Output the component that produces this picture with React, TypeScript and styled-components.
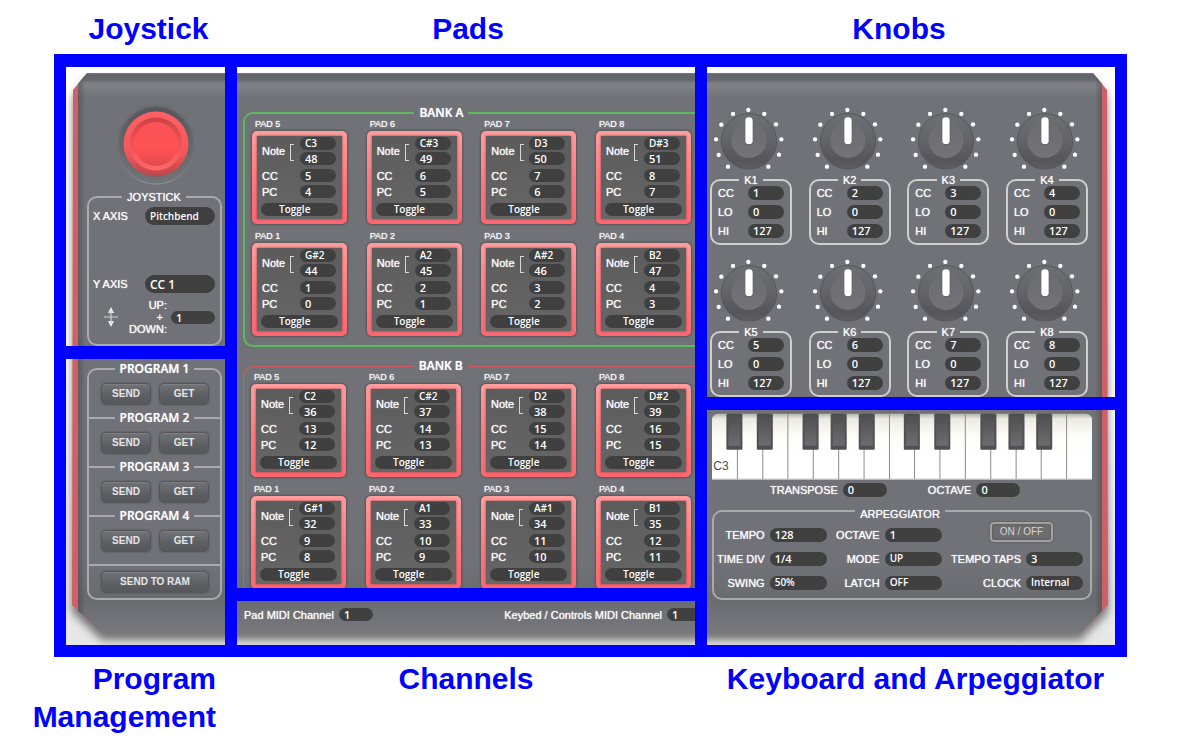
import React from "react";
import styled, { createGlobalStyle, css } from "styled-components";

const BLUE = "#0000ff";
const LABEL_FONT = '"Liberation Sans", Arial, sans-serif';
const VALUE_FONT = '"Open Sans", "Noto Sans", sans-serif';

const GlobalStyle = createGlobalStyle`
  *, *::before, *::after { box-sizing: border-box; }
  body { margin: 0; background: #fff; font-family: ${LABEL_FONT}; }
  fieldset { margin: 0; padding: 0; min-width: 0; border: 0; }
  legend { padding: 0; }
  svg { display: block; }
`;

/* ---------- page and frame ---------- */

const Page = styled.main`
  padding: 10px 73px 5px 54px;
`;

const columns = css`
  display: grid;
  grid-template-columns: minmax(0, 159fr) minmax(0, 458fr) minmax(0, 408fr);
  gap: 12px;
`;

const Titles = styled.div<{ $below?: boolean }>`
  ${columns}
  padding: ${(p) => (p.$below ? "3px 12px 0" : "0 12px 6px")};
`;

const Title = styled.h2<{ $align?: string; $shift?: string }>`
  display: flex;
  justify-content: ${(p) => p.$align ?? "center"};
  margin: 0;
  padding: ${(p) => p.$shift ?? "0"};
  color: ${BLUE};
  font-size: 30px;
  line-height: 38px;
  font-weight: 700;
  text-align: right;
  white-space: nowrap;
`;

const Frame = styled.div`
  ${columns}
  border: 12px solid ${BLUE};
  border-top-width: 13px;
  background: linear-gradient(#fff 50%, #e6e6e6 100%);
  overflow: hidden;
`;

const Column = styled.div<{ $n: number }>`
  grid-row: 1;
  grid-column: ${(p) => p.$n};
  z-index: 1;
  display: flex;
  flex-direction: column;
  gap: 13px;
`;

const Panel = styled.section<{ $fill?: boolean; $pad: string }>`
  flex: ${(p) => (p.$fill ? "1 1 0" : "0 0 auto")};
  padding: ${(p) => p.$pad};
  outline: 12px solid ${BLUE};
  overflow: hidden;
`;

/* ---------- device shell ---------- */

const Shell = styled.div`
  grid-row: 1;
  grid-column: 1 / -1;
  display: grid;
  margin: 6px 7px 12px 6px;
  filter: drop-shadow(0 7px 4px rgba(0, 0, 0, 0.5));
`;

const ShellSides = styled.div`
  display: grid;
  padding: 0 6px;
  background: #d25f66;
  clip-path: polygon(
    15px 0,
    calc(100% - 15px) 0,
    calc(100% - 1px) 17px,
    100% calc(100% - 28px),
    calc(100% - 28px) 100%,
    30px 100%,
    0 calc(100% - 28px),
    1px 17px
  );
`;

const ShellBody = styled.div`
  background:
    linear-gradient(
      90deg,
      rgba(50, 55, 55, 0.35) 0,
      rgba(50, 55, 55, 0.2) 4px,
      transparent 7px,
      transparent calc(100% - 7px),
      rgba(50, 55, 55, 0.2) calc(100% - 4px),
      rgba(50, 55, 55, 0.35) 100%
    ),
    linear-gradient(
      #77797b 0,
      #626569 2px,
      #64676b 7px,
      #7e7f84 10px,
      #7f8085 14px,
      #717277 24px,
      #717277 calc(100% - 70px),
      #6a6b6f calc(100% - 34px),
      #717277 calc(100% - 15px),
      #78787d 100%
    );
`;

/* ---------- shared controls ---------- */

const Text = styled.span`
  color: #fafafa;
  font-size: 11px;
  line-height: 12px;
  white-space: nowrap;
  text-shadow: 0 0 1px #fff;
`;

const pill = css<{ $w?: string; $h?: number; $size?: number; $left?: number }>`
  display: block;
  flex: none;
  width: ${(p) => p.$w ?? "36px"};
  height: ${(p) => p.$h ?? 13}px;
  margin: 0;
  padding: 0 0 ${(p) => (p.$h === 14 ? 1 : 0)}px ${(p) => p.$left ?? 5}px;
  border: 0;
  border-radius: 9px;
  background: #404040;
  color: #fff;
  font: 600 ${(p) => p.$size ?? 11}px / 13px ${VALUE_FONT};
  appearance: none;
`;

const ValueInput = styled.input`
  ${pill}
`;

const ValueSelect = styled.select`
  ${pill}
`;

type FieldProps = {
  value: string;
  label?: string;
  w?: string;
  h?: number;
  size?: number;
  left?: number;
};

const Value = ({ value, label, w, h, size, left }: FieldProps) => (
  <ValueInput defaultValue={value} aria-label={label} $w={w} $h={h} $size={size} $left={left} />
);

const Choice = ({ value, label, w, h, size, left }: FieldProps) => (
  <ValueSelect defaultValue={value} aria-label={label} $w={w} $h={h} $size={size} $left={left}>
    <option>{value}</option>
  </ValueSelect>
);

const Group = styled.fieldset<{ $pad: string; $bright?: boolean }>`
  padding: ${(p) => p.$pad};
  border: 2px solid ${(p) => (p.$bright ? "#cfcfce" : "#a9aaac")};
  border-radius: 10px;
`;

const Legend = styled.legend<{ $h?: number; $value?: boolean; $drop?: number }>`
  margin: 0 auto;
  padding: ${(p) => p.$drop ?? 0}px 5px 0;
  color: #fff;
  font-family: ${(p) => (p.$value ? VALUE_FONT : LABEL_FONT)};
  font-size: ${(p) => (p.$value ? 12 : 11)}px;
  font-weight: ${(p) => (p.$value ? 600 : 400)};
  line-height: ${(p) => p.$h ?? 14}px;
  text-shadow: 0 0 1px rgba(255, 255, 255, 0.8);
`;

const Row = styled.label`
  display: flex;
  align-items: center;
  justify-content: space-between;
`;

/* ---------- joystick ---------- */

const Stick = styled.div`
  display: flex;
  justify-content: center;
  padding: 0 0 4px 3px;
`;

const Axes = styled.div`
  display: flex;
  flex-direction: column;
  gap: 50px;
`;

const Range = styled.div`
  display: grid;
  grid-template-columns: 1fr auto 44px;
  align-items: center;
  column-gap: 4px;
  padding: 6px 0 0 11px;
`;

const RangeLabels = styled.label`
  display: flex;
  flex-direction: column;
  align-items: flex-end;
`;

const Plus = styled(Text)`
  padding-right: 4px;
`;

const JoystickDrawing = () => (
  <svg width="84" height="84" viewBox="0 0 84 84" role="img" aria-label="Joystick">
    <defs>
      <linearGradient id="socket" x1="0" y1="0" x2="0" y2="1">
        <stop offset="0" stopColor="#505155" />
        <stop offset="0.5" stopColor="#66676b" />
        <stop offset="1" stopColor="#75767a" />
      </linearGradient>
      <linearGradient id="socketEdge" x1="0" y1="0" x2="0" y2="1">
        <stop offset="0.5" stopColor="#6c6d72" stopOpacity="0" />
        <stop offset="1" stopColor="#898a8e" />
      </linearGradient>
      <radialGradient id="socketFade">
        <stop offset="0.8" stopColor="#4e4f53" />
        <stop offset="1" stopColor="#717277" stopOpacity="0" />
      </radialGradient>
      <linearGradient id="ring" x1="0" y1="0" x2="0" y2="1">
        <stop offset="0" stopColor="#fd6164" />
        <stop offset="0.6" stopColor="#f4595c" />
        <stop offset="1" stopColor="#bb4549" />
      </linearGradient>
      <linearGradient id="dish" x1="0" y1="0" x2="0" y2="1">
        <stop offset="0" stopColor="#cc4145" />
        <stop offset="0.45" stopColor="#ef5053" />
        <stop offset="1" stopColor="#ff686a" />
      </linearGradient>
      <linearGradient id="cap" x1="0" y1="0" x2="0" y2="1">
        <stop offset="0" stopColor="#fb5356" />
        <stop offset="0.6" stopColor="#ff5254" />
        <stop offset="1" stopColor="#e24a4d" />
      </linearGradient>
    </defs>
    <circle cx="42" cy="40" r="41" fill="url(#socketFade)" opacity="0.6" />
    <circle cx="42" cy="43" r="38" fill="url(#socket)" opacity="0.6" />
    <circle cx="42" cy="43" r="39" fill="none" stroke="url(#socketEdge)" strokeWidth="1.5" />
    <circle cx="42" cy="42" r="32.5" fill="url(#ring)" />
    <circle cx="42" cy="42" r="26.5" fill="url(#dish)" />
    <circle cx="42" cy="42" r="22" fill="url(#cap)" />
  </svg>
);

const UpDownIcon = () => (
  <svg width="14" height="20" viewBox="0 0 14 20" aria-hidden="true">
    <path d="M7 0l3 6H4zM7 20l3-6H4z" fill="#eee" />
    <path d="M7 4v12M0 10h14" stroke="#cfcfcf" strokeWidth="1.2" fill="none" />
  </svg>
);

const JoystickPanel = () => (
  <Panel $fill $pad="35px 3px 0 21px">
    <Stick>
      <JoystickDrawing />
    </Stick>
    <Group $pad="3px 5px 9px 4px">
      <Legend>JOYSTICK</Legend>
      <Axes>
        <Row>
          <Text>X AXIS</Text>
          <Choice value="Pitchbend" w="70px" h={18} size={10} />
        </Row>
        <Row>
          <Text>Y AXIS</Text>
          <Choice value="CC 1" w="70px" h={18} size={12} />
        </Row>
      </Axes>
      <Range>
        <UpDownIcon />
        <RangeLabels htmlFor="y-range">
          <Text>UP:</Text>
          <Plus>+</Plus>
          <Text>DOWN:</Text>
        </RangeLabels>
        <ValueInput id="y-range" defaultValue="1" $w="44px" />
      </Range>
    </Group>
  </Panel>
);

/* ---------- programs ---------- */

const ProgramTitle = styled.h3`
  display: flex;
  align-items: center;
  gap: 5px;
  margin: 6px 0 0;
  color: #fff;
  font: 600 12px / 14px ${VALUE_FONT};
  white-space: nowrap;
  text-shadow: 0 0 1px rgba(255, 255, 255, 0.6);

  &::before,
  &::after {
    content: "";
    flex: 1;
    height: 2px;
    background: #a9aaac;
  }
`;

const Buttons = styled.div<{ $ruled?: boolean }>`
  display: flex;
  gap: 8px;
  padding: ${(p) => (p.$ruled ? "5px" : "7px")} 11px 0 12px;
  ${(p) => p.$ruled && "margin-top: 12px; border-top: 2px solid #a9aaac;"}
`;

const PushButton = styled.button`
  flex: 1;
  height: 22px;
  padding: 0;
  border: 1px solid #55565a;
  border-radius: 5px;
  background: linear-gradient(#727377, #5d5e62 60%, #57585c);
  box-shadow: inset 0 1px 0 #7e7f83, 0 0 2px #4d4e52;
  color: #e6e6e6;
  font: 700 10px / 12px ${LABEL_FONT};
`;

const ProgramPanel = () => (
  <Panel $pad="3px 3px 45px 21px">
    <Group $pad="0 0 5px">
      <Legend $value>PROGRAM 1</Legend>
      {[1, 2, 3, 4].map((n) => (
        <React.Fragment key={n}>
          {n > 1 && <ProgramTitle>PROGRAM {n}</ProgramTitle>}
          <Buttons>
            <PushButton>SEND</PushButton>
            <PushButton>GET</PushButton>
          </Buttons>
        </React.Fragment>
      ))}
      <Buttons $ruled>
        <PushButton>SEND TO RAM</PushButton>
      </Buttons>
    </Group>
  </Panel>
);

/* ---------- pads ---------- */

const Bank = styled.fieldset<{ $color: string; $line: number }>`
  padding: 0 4px 9px 7px;
  border: ${(p) => p.$line}px solid ${(p) => p.$color};
  border-right: 0;
  border-radius: 10px 0 0 10px;

  & + & {
    margin-top: 13px;
  }
`;

const BankLegend = styled(Legend)`
  margin-left: 37%;
`;

const PadGrid = styled.div`
  display: grid;
  grid-template-columns: repeat(4, 95px);
  justify-content: space-between;
  row-gap: 7px;
`;

const PadName = styled.h4`
  margin: 0 0 2px 3px;
  color: #f4f4f4;
  font: 400 9px / 10px ${LABEL_FONT};
  text-shadow: 0 0 1px #fff;
`;

const PadFace = styled.div`
  height: 93px;
  padding: 5px;
  border-radius: 5px;
  background: linear-gradient(#ff9c9c, #fd7c80 50%, #fb6670);
  box-shadow: 0 0 2px 1px #55565a;
`;

const PadBody = styled.div`
  display: flex;
  flex-direction: column;
  height: 100%;
  padding: 1px 4px 2px;
  background: linear-gradient(#5c5c5c, #666);
  box-shadow: 0 0 2px #8d3f42;
`;

const PadLine = styled(Row)<{ $gap: number }>`
  margin-top: ${(p) => p.$gap}px;
  padding: 0 2px 0 1px;
`;

const NoteLine = styled.div`
  display: flex;
  align-items: center;
  padding: 0 2px 0 1px;
`;

const Bracket = styled.span`
  width: 4px;
  height: 17px;
  margin: 2px auto 0 5px;
  border: 1px solid #d8d8d8;
  border-right: 0;
`;

const NoteValues = styled.div`
  display: grid;
  row-gap: 2px;
`;

const ToggleLine = styled.div`
  margin-top: 5px;
`;

const PadUnit = ({ n, note, num, cc, pc }: { n: number; note: string; num: number; cc: number; pc: number }) => (
  <article>
    <PadName>PAD {n}</PadName>
    <PadFace>
      <PadBody>
        <NoteLine>
          <Text>Note</Text>
          <Bracket />
          <NoteValues>
            <Value value={note} label="Note name" size={10} />
            <Value value={String(num)} label="Note number" />
          </NoteValues>
        </NoteLine>
        <PadLine $gap={4}>
          <Text>CC</Text>
          <Value value={String(cc)} />
        </PadLine>
        <PadLine $gap={3}>
          <Text>PC</Text>
          <Value value={String(pc)} />
        </PadLine>
        <ToggleLine>
          <Choice value="Toggle" label="Pad mode" w="100%" size={10} left={18} />
        </ToggleLine>
      </PadBody>
    </PadFace>
  </article>
);

const PAD_ORDER = [5, 6, 7, 8, 1, 2, 3, 4];

const banks = [
  {
    name: "BANK A",
    color: "#5fb760",
    line: 2,
    notes: ["C3", "C#3", "D3", "D#3", "G#2", "A2", "A#2", "B2"],
    firstNote: 44,
    firstCc: 1,
  },
  {
    name: "BANK B",
    color: "#d05a64",
    line: 1,
    notes: ["C2", "C#2", "D2", "D#2", "G#1", "A1", "A#1", "B1"],
    firstNote: 32,
    firstCc: 9,
  },
];

const PadsPanel = () => (
  <Panel $fill $pad="40px 0 0 6px">
    {banks.map((b) => (
      <Bank key={b.name} $color={b.color} $line={b.line}>
        <BankLegend $value $h={12}>
          {b.name}
        </BankLegend>
        <PadGrid>
          {PAD_ORDER.map((n, i) => (
            <PadUnit
              key={n}
              n={n}
              note={b.notes[i]}
              num={b.firstNote + n - 1}
              cc={b.firstCc + n - 1}
              pc={b.firstCc + n - 2}
            />
          ))}
        </PadGrid>
      </Bank>
    ))}
  </Panel>
);

/* ---------- channels ---------- */

const Channels = styled.div`
  display: flex;
  justify-content: space-between;
  margin-right: -6px;
`;

const Inline = styled.label`
  display: flex;
  align-items: center;
  gap: 5px;
`;

const ChannelsPanel = () => (
  <Panel $pad="7px 0 24px 7px">
    <Channels>
      <Inline>
        <Text>Pad MIDI Channel</Text>
        <Value value="1" w="34px" />
      </Inline>
      <Inline>
        <Text>Keybed / Controls MIDI Channel</Text>
        <Value value="1" w="34px" />
      </Inline>
    </Channels>
  </Panel>
);

/* ---------- knobs ---------- */

const KnobGrid = styled.div`
  display: grid;
  grid-template-columns: repeat(4, 82px);
  justify-content: space-between;
  row-gap: 14px;
`;

const Dial = styled.div`
  padding: 0 0 3px 4px;
`;

const KnobRows = styled.div`
  display: grid;
  row-gap: 5px;
`;

const KNOB_DOTS = [
  [103, 9], [57, 21], [151, 21], [22, 53], [186, 52], [6, 97],
  [202, 97], [14, 144], [195, 143], [42, 179], [163, 179],
];

const KnobDrawing = () => (
  <svg width="70" height="64" viewBox="0 0 210 192" role="img" aria-label="Knob">
    <defs>
      <linearGradient id="knobRim" x1="0" y1="0" x2="0" y2="1">
        <stop offset="0" stopColor="#6f7074" />
        <stop offset="0.5" stopColor="#636367" />
        <stop offset="0.85" stopColor="#55555a" />
        <stop offset="1" stopColor="#606064" />
      </linearGradient>
      <linearGradient id="knobTop" x1="0" y1="0" x2="0" y2="1">
        <stop offset="0" stopColor="#6b6b70" />
        <stop offset="1" stopColor="#737378" />
      </linearGradient>
    </defs>
    {KNOB_DOTS.map(([x, y]) => (
      <circle key={`${x}-${y}`} cx={x} cy={y} r="6.5" fill="#fff" />
    ))}
    <circle cx="105" cy="103" r="83" fill="url(#knobRim)" stroke="#565658" strokeWidth="3" />
    <circle cx="105" cy="101" r="51" fill="url(#knobTop)" stroke="#77777c" strokeWidth="2" />
    <rect x="92" y="29" width="26" height="84" rx="12" fill="#58585b" opacity="0.6" />
    <rect x="94" y="31" width="22" height="80" rx="10" fill="#fff" />
  </svg>
);

const KnobsPanel = () => (
  <Panel $pad="40px 27px 0 3px">
    <KnobGrid>
      {[1, 2, 3, 4, 5, 6, 7, 8].map((n) => (
        <article key={n}>
          <Dial>
            <KnobDrawing />
          </Dial>
          <Group $bright $pad="0 6px 5px">
            <Legend $h={12}>K{n}</Legend>
            <KnobRows>
              <Row>
                <Text>CC</Text>
                <Value value={String(n)} h={14} />
              </Row>
              <Row>
                <Text>LO</Text>
                <Value value="0" h={14} />
              </Row>
              <Row>
                <Text>HI</Text>
                <Value value="127" h={14} />
              </Row>
            </KnobRows>
          </Group>
        </article>
      ))}
    </KnobGrid>
  </Panel>
);

/* ---------- keyboard and arpeggiator ---------- */

const Keys = styled.svg`
  width: 100%;
  height: 67px;
`;

const BLACK_KEYS = [43, 134, 271, 355, 439, 574, 665, 803, 887, 970];

const KeyboardDrawing = () => (
  <Keys viewBox="0 0 1137 201" preserveAspectRatio="none" role="img" aria-label="Keyboard">
    <defs>
      <linearGradient id="ivory" x1="0" y1="0" x2="0" y2="1">
        <stop offset="0" stopColor="#b5b4ac" />
        <stop offset="0.08" stopColor="#ebeae2" />
        <stop offset="0.3" stopColor="#fbfbf6" />
        <stop offset="0.6" stopColor="#fff" />
      </linearGradient>
      <linearGradient id="ebony" x1="0" y1="0" x2="0" y2="1">
        <stop offset="0" stopColor="#4d4d4f" />
        <stop offset="1" stopColor="#6d6d6f" />
      </linearGradient>
    </defs>
    <path d="M0 201V22Q0 2 20 2H1117Q1137 2 1137 22V201Z" fill="url(#ivory)" />
    {Array.from({ length: 14 }, (_, i) => (
      <path key={i} d={`M${Math.round((i + 1) * 75.8)} 4V199`} stroke="#8c8c8a" strokeWidth="3" />
    ))}
    <path d="M0 199H1137" stroke="#a5a5a5" strokeWidth="3" />
    {BLACK_KEYS.map((x) => (
      <g key={x}>
        <rect x={x} y="2" width="48" height="108" rx="3" fill="#515153" />
        <rect x={x + 6} y="2" width="36" height="96" fill="url(#ebony)" />
      </g>
    ))}
    <text x="4" y="172" fontSize="36" fontFamily="Liberation Sans, Arial, sans-serif" fill="#4a4a4a">
      C3
    </text>
  </Keys>
);

const Shift = styled.div`
  display: flex;
  gap: 41px;
  padding: 3px 0 6px 58px;
`;

const ArpColumns = styled.div`
  display: flex;
  justify-content: space-between;
`;

const ArpColumn = styled.div`
  display: grid;
  grid-template-columns: auto 57px;
  grid-auto-rows: 14px;
  gap: 10px 5px;
  align-items: center;
`;

const ArpField = styled.label`
  display: grid;
  grid-template-columns: subgrid;
  grid-column: 1 / -1;
  align-items: center;
  justify-items: end;
`;

const OnOff = styled.button`
  grid-column: 1 / -1;
  justify-self: end;
  align-self: end;
  width: 63px;
  height: 20px;
  margin-right: 30px;
  padding: 0;
  border: 2px solid #a2a2a2;
  border-radius: 4px;
  background: #6d6d6d;
  box-shadow: inset 0 0 2px #444, 0 0 2px #4b4b4b;
  color: #d4d4d4;
  font: 400 10px / 12px ${LABEL_FONT};
`;

const ArpItem = ({ name, value, list, size }: { name: string; value: string; list?: boolean; size?: number }) => (
  <ArpField>
    <Text>{name}</Text>
    {list ? <Choice value={value} w="57px" h={14} size={size} /> : <Value value={value} w="57px" h={14} size={size} />}
  </ArpField>
);

const KeyboardPanel = () => (
  <Panel $pad="3px 23px 45px 5px">
    <KeyboardDrawing />
    <Shift>
      <Inline>
        <Text>TRANSPOSE</Text>
        <Value value="0" w="44px" h={14} />
      </Inline>
      <Inline>
        <Text>OCTAVE</Text>
        <Value value="0" w="44px" h={14} />
      </Inline>
    </Shift>
    <Group $pad="9px 7px 8px 3px">
      <Legend $h={10} $drop={6}>
        ARPEGGIATOR
      </Legend>
      <ArpColumns>
        <ArpColumn>
          <ArpItem name="TEMPO" value="128" />
          <ArpItem name="TIME DIV" value="1/4" list />
          <ArpItem name="SWING" value="50%" list size={10} />
        </ArpColumn>
        <ArpColumn>
          <ArpItem name="OCTAVE" value="1" />
          <ArpItem name="MODE" value="UP" list size={10} />
          <ArpItem name="LATCH" value="OFF" list size={10} />
        </ArpColumn>
        <ArpColumn>
          <OnOff>ON / OFF</OnOff>
          <ArpItem name="TEMPO TAPS" value="3" />
          <ArpItem name="CLOCK" value="Internal" list size={10} />
        </ArpColumn>
      </ArpColumns>
    </Group>
  </Panel>
);

export default function App() {
  return (
    <Page>
      <GlobalStyle />
      <Titles>
        <Title $shift="0 0 0 6px">Joystick</Title>
        <Title $shift="0 0 0 4px">Pads</Title>
        <Title $shift="0 24px 0 0">Knobs</Title>
      </Titles>
      <Frame>
        <Shell>
          <ShellSides>
            <ShellBody />
          </ShellSides>
        </Shell>
        <Column $n={1}>
          <JoystickPanel />
          <ProgramPanel />
        </Column>
        <Column $n={2}>
          <PadsPanel />
          <ChannelsPanel />
        </Column>
        <Column $n={3}>
          <KnobsPanel />
          <KeyboardPanel />
        </Column>
      </Frame>
      <Titles $below>
        <Title $align="flex-end" $shift="0 9px 0 0">
          Program
          <br />
          Management
        </Title>
        <Title>Channels</Title>
        <Title $shift="0 0 0 9px">Keyboard and Arpeggiator</Title>
      </Titles>
    </Page>
  );
}
